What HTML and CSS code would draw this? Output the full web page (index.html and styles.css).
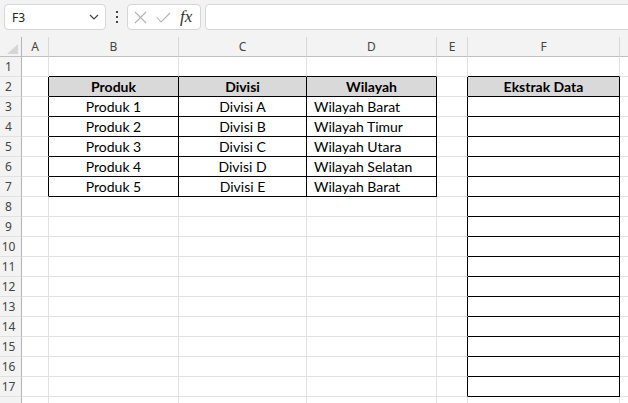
FILE: index.html
```html
<!DOCTYPE html>
<html lang="id">
<head>
    <meta charset="UTF-8">
    <title>Ekstrak Data</title>
    <link rel="stylesheet" href="styles.css">
</head>
<body>
    <!-- formula bar -->
    <div class="toolbar">
        <div class="namebox">
            <span>F3</span>
            <svg width="10" height="6" viewBox="0 0 10 6"><path d="M1 1 L5 5 L9 1" fill="none" stroke="#444" stroke-width="1.2"/></svg>
        </div>
        <div class="dots"><i></i><i></i><i></i></div>
        <div class="fnbox">
            <svg width="13" height="13" viewBox="0 0 13 13"><path d="M1 1 L12 12 M12 1 L1 12" stroke="#b4b4b4" stroke-width="1.1"/></svg>
            <svg width="15" height="11" viewBox="0 0 15 11"><path d="M1 5.5 L5 10 L14 1" fill="none" stroke="#b4b4b4" stroke-width="1.1"/></svg>
            <span class="fx">fx</span>
        </div>
        <div class="formula"></div>
    </div>

    <!-- sheet -->
    <table class="sheet">
        <colgroup>
            <col class="c-rh"><col class="c-a"><col class="c-b"><col class="c-c"><col class="c-d"><col class="c-e"><col class="c-f"><col class="c-g">
        </colgroup>
        <tr class="gap"><td colspan="8"></td></tr>
        <tr class="colhead">
            <th class="corner"><span class="tri"></span></th>
            <th>A</th><th>B</th><th>C</th><th>D</th><th>E</th><th>F</th><th></th>
        </tr>
        <tr><th>1</th><td></td><td class="bb"></td><td class="bb"></td><td class="bb"></td><td></td><td class="bb"></td><td></td></tr>
        <tr><th>2</th><td class="br"></td><td class="box hd">Produk</td><td class="box hd">Divisi</td><td class="box hd">Wilayah</td><td class="br"></td><td class="box hd">Ekstrak Data</td><td></td></tr>
        <tr><th>3</th><td class="br"></td><td class="box">Produk 1</td><td class="box">Divisi A</td><td class="box left">Wilayah Barat</td><td class="br"></td><td class="box"></td><td></td></tr>
        <tr><th>4</th><td class="br"></td><td class="box">Produk 2</td><td class="box">Divisi B</td><td class="box left">Wilayah Timur</td><td class="br"></td><td class="box"></td><td></td></tr>
        <tr><th>5</th><td class="br"></td><td class="box">Produk 3</td><td class="box">Divisi C</td><td class="box left">Wilayah Utara</td><td class="br"></td><td class="box"></td><td></td></tr>
        <tr><th>6</th><td class="br"></td><td class="box">Produk 4</td><td class="box">Divisi D</td><td class="box left">Wilayah Selatan</td><td class="br"></td><td class="box"></td><td></td></tr>
        <tr><th>7</th><td class="br"></td><td class="box">Produk 5</td><td class="box">Divisi E</td><td class="box left">Wilayah Barat</td><td class="br"></td><td class="box"></td><td></td></tr>
        <tr><th>8</th><td></td><td></td><td></td><td></td><td class="br"></td><td class="box"></td><td></td></tr>
        <tr><th>9</th><td></td><td></td><td></td><td></td><td class="br"></td><td class="box"></td><td></td></tr>
        <tr><th>10</th><td></td><td></td><td></td><td></td><td class="br"></td><td class="box"></td><td></td></tr>
        <tr><th>11</th><td></td><td></td><td></td><td></td><td class="br"></td><td class="box"></td><td></td></tr>
        <tr><th>12</th><td></td><td></td><td></td><td></td><td class="br"></td><td class="box"></td><td></td></tr>
        <tr><th>13</th><td></td><td></td><td></td><td></td><td class="br"></td><td class="box"></td><td></td></tr>
        <tr><th>14</th><td></td><td></td><td></td><td></td><td class="br"></td><td class="box"></td><td></td></tr>
        <tr><th>15</th><td></td><td></td><td></td><td></td><td class="br"></td><td class="box"></td><td></td></tr>
        <tr><th>16</th><td></td><td></td><td></td><td></td><td class="br"></td><td class="box"></td><td></td></tr>
        <tr><th>17</th><td></td><td></td><td></td><td></td><td class="br"></td><td class="box"></td><td></td></tr>
        <tr><th></th><td></td><td></td><td></td><td></td><td></td><td></td><td></td></tr>
    </table>
</body>
</html>
```

FILE: styles.css
```css
/* Excel-like sheet */

body {
    margin: 0;
    background: #fff;
    overflow: hidden;
    font-family: "Lato", "Liberation Sans", sans-serif;
}

/* formula bar */
.toolbar {
    display: flex;
    align-items: flex-start;
    height: 30px;
    padding: 4px 0 0 4px;
    box-sizing: border-box;
    background: #f3f3f3;
    overflow: hidden;
}

.namebox,
.fnbox,
.formula {
    height: 26px;
    box-sizing: border-box;
    background: #fff;
    border: 1px solid #d6d6d6;
    border-radius: 4px;
}

.namebox {
    width: 102px;
    display: flex;
    align-items: center;
    justify-content: space-between;
    padding: 0 6px 0 7px;
    font-family: "Noto Sans", "Open Sans", sans-serif;
    font-size: 12px;
    color: #222;
}

.dots {
    width: 21px;
    height: 26px;
    display: flex;
    flex-direction: column;
    align-items: center;
    justify-content: center;
    gap: 3px;
}

.dots i {
    width: 2px;
    height: 2px;
    background: #444;
}

.fnbox {
    width: 74px;
    display: flex;
    align-items: center;
    padding-left: 6px;
    gap: 9px;
}

.fx {
    font-family: "Liberation Serif", "DejaVu Serif", serif;
    font-style: italic;
    font-size: 17px;
    color: #333;
}

.formula {
    flex: 1;
    margin-left: 4px;
    margin-right: -8px;
}

/* grid */
.sheet {
    border-collapse: separate;
    border-spacing: 0;
    table-layout: fixed;
    width: 640px;
}

.c-rh { width: 22px; }
.c-a { width: 27px; }
.c-b { width: 130px; }
.c-c { width: 128px; }
.c-d { width: 130px; }
.c-e { width: 31px; }
.c-f { width: 152px; }
.c-g { width: 20px; }

.sheet td,
.sheet th {
    height: 19px;
    padding: 0;
    border-right: 1px solid #e1e1e1;
    border-bottom: 1px solid #e1e1e1;
    font-size: 14px;
    line-height: 19px;
    color: #000;
    text-align: center;
    white-space: nowrap;
    overflow: hidden;
}

.sheet tr.gap td {
    height: 7px;
    background: #f3f3f3;
    border: none;
}

.sheet th {
    font-family: "Noto Sans", "Open Sans", sans-serif;
    font-weight: normal;
    font-size: 12px;
    color: #444;
    background: #f3f3f3;
}

.sheet tr > th:first-child {
    border-right-color: #b4b4b4;
    padding-right: 4px;
}

.colhead th {
    border-right-color: #d8d8d8;
    border-bottom-color: #bfbfbf;
}

.colhead th.corner {
    position: relative;
    border-right-color: #f3f3f3;
}

.tri {
    position: absolute;
    right: 3px;
    bottom: 2px;
    width: 0;
    height: 0;
    border-left: 11px solid transparent;
    border-bottom: 10px solid #d6d6d6;
}

.bb { border-bottom-color: #000 !important; }
.br { border-right-color: #000 !important; }

.sheet td.box {
    border-right-color: #000;
    border-bottom-color: #000;
}

.sheet td.hd {
    background: #d9d9d9;
    font-weight: bold;
}

.sheet td.left {
    text-align: left;
    padding-left: 7px;
}
```
